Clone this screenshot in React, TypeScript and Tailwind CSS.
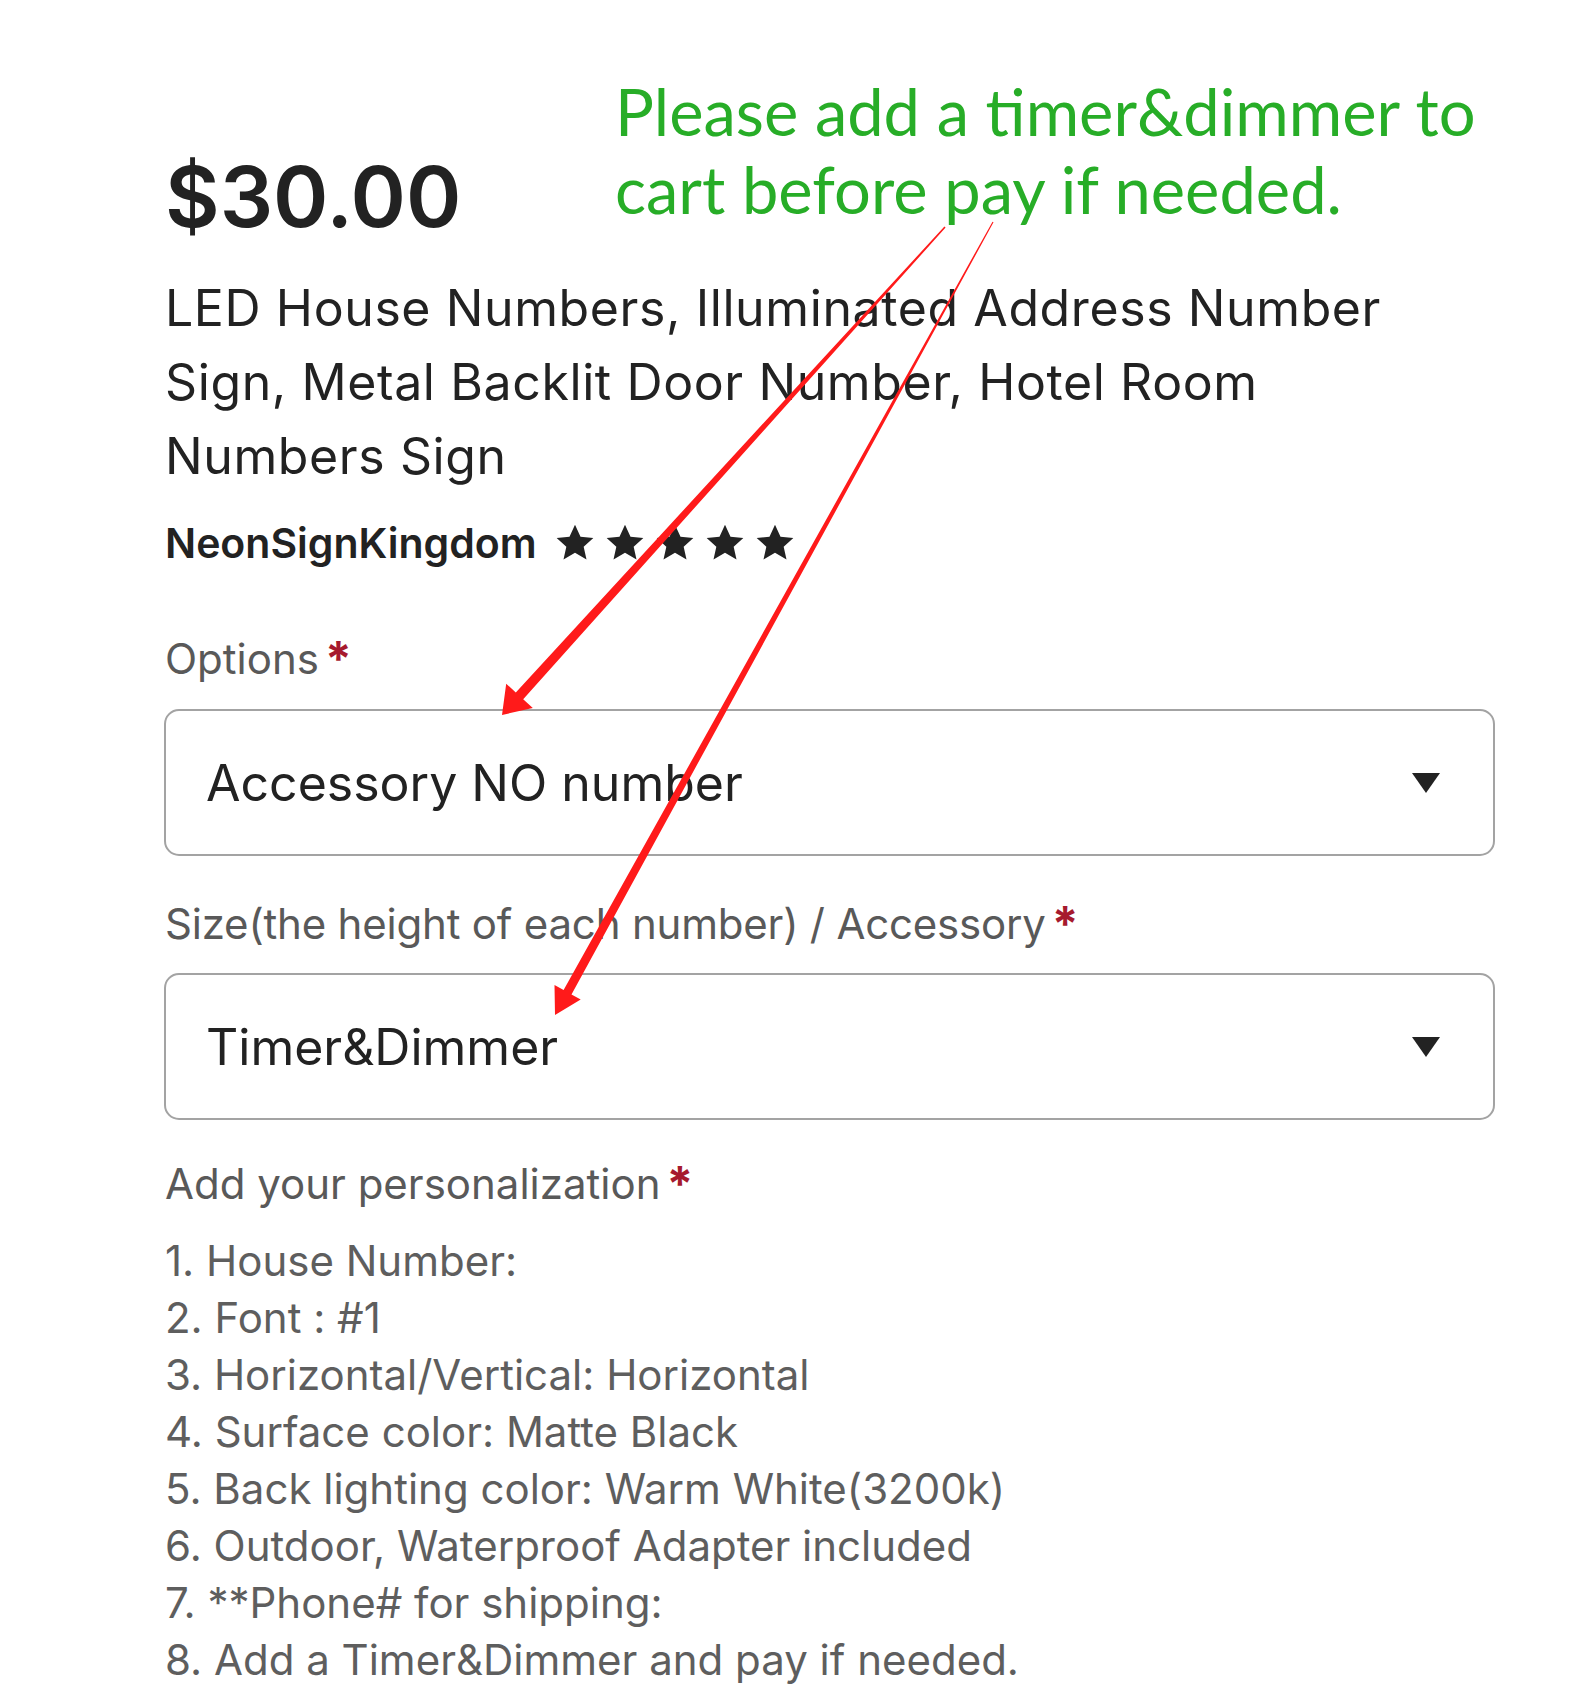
import React from "react";

const listLines = [
  "1. House Number:",
  "2. Font : #1",
  "3. Horizontal/Vertical: Horizontal",
  "4. Surface color: Matte Black",
  "5. Back lighting color: Warm White(3200k)",
  "6. Outdoor, Waterproof Adapter included",
  "7. **Phone# for shipping:",
  "8. Add a Timer&Dimmer and pay if needed.",
];

const Star = () => (
  <svg viewBox="0 0 24 24" className="w-[40px] h-[40px]" fill="#222222">
    <path d="M12 1l3.3 7.2 7.7.8-5.8 5.2 1.7 7.7L12 17.9l-6.9 4 1.7-7.7L1 9l7.7-.8z" />
  </svg>
);

const Caret = () => (
  <svg viewBox="0 0 28 20" className="w-[28px] h-[20px]" fill="#222222">
    <path d="M0 0h28L14 20z" />
  </svg>
);

const Required = () => (
  <span className="relative top-[2px] ml-[6px] text-[48px] leading-[0] font-bold text-[#a61a2e]">
    *
  </span>
);

const SelectBox = ({ value }: { value: string }) => (
  <div className="flex items-center justify-between h-[147px] w-[1331px] border-2 border-[#a3a3a3] rounded-[15px] pl-[40px] pr-[53px]">
    <span className="text-[50px] leading-[64px] text-[#222222]">{value}</span>
    <Caret />
  </div>
);

export default function App() {
  return (
    <div
      className="relative w-[1588px] h-[1702px] bg-white overflow-hidden"
      style={{ fontFamily: "Inter, 'Liberation Sans', sans-serif" }}
    >
      <div className="pl-[165px] pt-[72px]">
        {/* price + note */}
        <div className="flex items-start">
          <div className="w-[450px] mt-[75px] text-[84px] leading-[100px] font-semibold text-[#222222]">
            $30.00
          </div>
          <div
            className="text-[65px] leading-[78px] text-[#27ad27]"
            style={{ fontFamily: "Lato, 'Open Sans', sans-serif" }}
          >
            Please add a timer&amp;dimmer to
            <br />
            cart before pay if needed.
          </div>
        </div>

        <h1 className="mt-[24px] w-[1300px] text-[50px] leading-[74px] tracking-[0.6px] text-[#222222] font-normal">
          LED House Numbers, Illuminated Address Number
          <br />
          Sign, Metal Backlit Door Number, Hotel Room
          <br />
          Numbers Sign
        </h1>

        <div className="mt-[22px] flex items-center h-[56px]">
          <span className="text-[41px] leading-[56px] font-semibold text-[#222222]">
            NeonSignKingdom
          </span>
          <div className="flex items-center gap-[10px] ml-[18px]">
            <Star />
            <Star />
            <Star />
            <Star />
            <Star />
          </div>
        </div>

        <div className="mt-[60px] text-[42px] leading-[56px] text-[#595959]">
          Options
          <Required />
        </div>
        <div className="mt-[22px] -ml-[1px]">
          <SelectBox value="Accessory NO number" />
        </div>

        <div className="mt-[40px] text-[42px] leading-[56px] tracking-[-0.2px] text-[#595959]">
          Size(the height of each number) / Accessory
          <Required />
        </div>
        <div className="mt-[21px] -ml-[1px]">
          <SelectBox value="Timer&Dimmer" />
        </div>

        <div className="mt-[36px] text-[42px] leading-[56px] text-[#595959]">
          Add your personalization
          <Required />
        </div>
        <div className="mt-[20px] flex flex-col text-[42px] leading-[57px] text-[#5e5e5e]">
          {listLines.map((l) => (
            <div key={l}>{l}</div>
          ))}
        </div>
      </div>

      {/* red annotation arrows */}
      <svg
        className="absolute inset-0 pointer-events-none"
        width="1588"
        height="1702"
        viewBox="0 0 1588 1702"
      >
        <polygon
          fill="#ff1a1a"
          points="945.6,227.5 523.2,699.2 532.8,707.9 502,715 506.2,683.7 515.8,692.4 944.4,226.5"
        />
        <polygon
          fill="#ff1a1a"
          points="993.5,222.3 571.5,994.4 580.7,999.5 555,1015 554.5,984.9 563.6,990 992.5,221.7"
        />
      </svg>
    </div>
  );
}
